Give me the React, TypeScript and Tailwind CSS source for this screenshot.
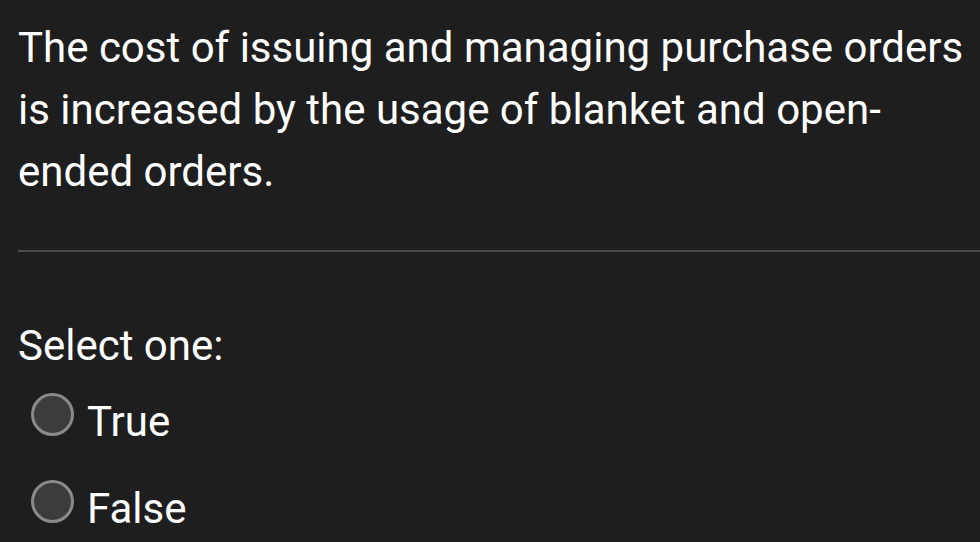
import React from "react";

function Radio() {
  return (
    <span className="mt-[2px] box-border block h-[43px] w-[43px] shrink-0 rounded-full border-[3px] border-[#8a8a8a] bg-[#3c3c3c]" />
  );
}

export default function App() {
  return (
    <div
      className="min-h-[542px] w-[980px] overflow-hidden bg-[#1e1e1e] text-white"
      style={{ fontFamily: "Roboto, 'Noto Sans', sans-serif" }}
    >
      <div className="pl-[18px] pt-[17px]">
        <p className="text-[42px] leading-[62px]">
          The cost of issuing and managing purchase orders is increased by the usage of blanket and open-ended orders.
        </p>
        <div className="mt-[47px] h-[2px] bg-[#4a4a4a]" />
        <p className="mt-[63px] text-[42px] leading-[62px]">Select one:</p>
        <div className="mt-[14px] flex flex-col gap-[25px] pl-[13px]">
          <label className="flex items-start gap-[13px]">
            <Radio />
            <span className="text-[42px] leading-[62px]">True</span>
          </label>
          <label className="flex items-start gap-[13px]">
            <Radio />
            <span className="text-[42px] leading-[62px]">False</span>
          </label>
        </div>
      </div>
    </div>
  );
}
